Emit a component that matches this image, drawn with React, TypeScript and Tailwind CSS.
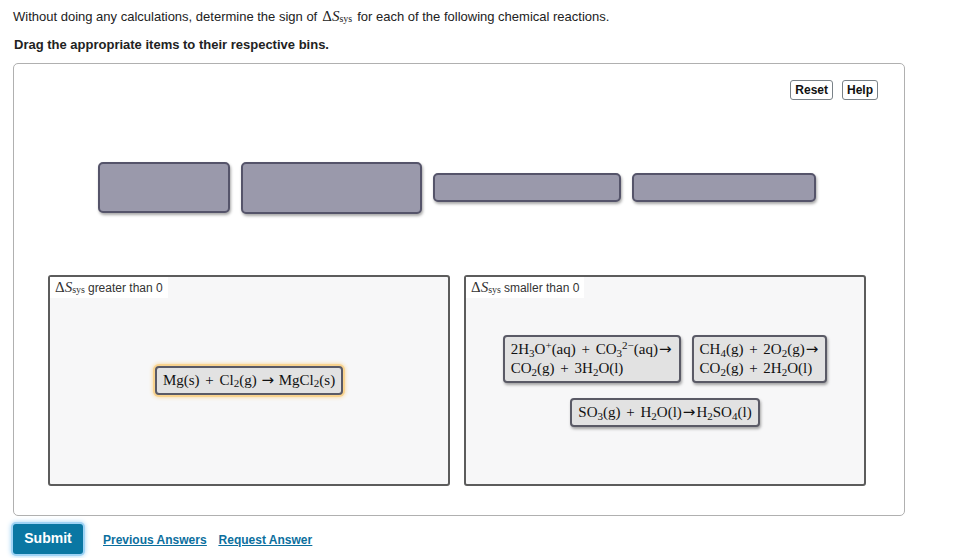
import React from 'react'

const serif = { fontFamily: '"Liberation Serif", "DejaVu Serif", serif' }

function DeltaS() {
  return (
    <span className="font-['Liberation_Serif',serif] text-[15px] leading-[16px] whitespace-nowrap">
      Δ<i>S</i>
      <sub className="text-[10px] relative top-[1px]">sys</sub>
    </span>
  )
}

function Arrow() {
  return <span className="font-['DejaVu_Sans',sans-serif] text-[15px] px-[1px]">→</span>
}

function Plus() {
  return <span className="mx-[2px]">+</span>
}

function Tile({ className }: { className: string }) {
  return (
    <div
      className={`bg-[#9a99ab] border-2 border-[#55546a] rounded-[5px] shadow-[1px_2px_3px_rgba(0,0,0,0.35)] ${className}`}
    />
  )
}

function Item({ children, glow = false }: { children: React.ReactNode; glow?: boolean }) {
  return (
    <div
      className={`bg-[#e2e2e2] border-2 border-[#5a5a66] rounded-[4px] px-[6px] py-[3px] text-[15px] leading-[19px] text-[#111] ${
        glow
          ? 'shadow-[0_0_0_2px_#f9d38e,0_0_4px_2px_#f9d38e]'
          : 'shadow-[1px_2px_3px_rgba(0,0,0,0.35)]'
      }`}
      style={serif}
    >
      {children}
    </div>
  )
}

function Bin({ label, children }: { label: string; children: React.ReactNode }) {
  return (
    <div className="relative w-[402px] h-[211px] bg-[#f7f7f8] border-2 border-[#5c5c5c] rounded-[3px] flex items-center justify-center">
      <div className="absolute top-0 left-0 bg-white px-[5px] pt-[2px] pb-[2px] text-[12px] leading-[16px] text-[#333] flex items-baseline gap-[3px]">
        <DeltaS />
        <span>{label}</span>
      </div>
      {children}
    </div>
  )
}

export default function App() {
  return (
    <div className="w-[968px] h-[558px] bg-white text-[#222] font-['Liberation_Sans',Arial,sans-serif] px-[13px] pt-[7px]">
      {/* Instructions */}
      <p className="text-[13px] flex items-baseline gap-[5px] h-[22px]">
        <span>Without doing any calculations, determine the sign of</span>
        <DeltaS />
        <span>for each of the following chemical reactions.</span>
      </p>
      <p className="text-[13px] font-bold mt-[6px] pl-[1px]">Drag the appropriate items to their respective bins.</p>

      {/* Drag area */}
      <div className="mt-[8px] w-[892px] h-[453px] border border-[#b0b0b0] rounded-[5px] bg-white flex flex-col">
        <div className="flex justify-end gap-[9px] pt-[16px] pr-[26px]">
          <button className="h-[20px] px-[4px] text-[12px] font-bold text-[#111] border border-[#7a8288] rounded-[3px] bg-white">
            Reset
          </button>
          <button className="h-[20px] px-[4px] text-[12px] font-bold text-[#111] border border-[#7a8288] rounded-[3px] bg-white">
            Help
          </button>
        </div>

        <div className="flex items-center gap-[11px] pl-[84px] mt-[62px] h-[52px]">
          <Tile className="w-[132px] h-[51px]" />
          <Tile className="w-[181px] h-[52px]" />
          <Tile className="w-[188px] h-[29px]" />
          <Tile className="w-[184px] h-[29px]" />
        </div>

        <div className="flex gap-[14px] pl-[34px] mt-[61px]">
          <Bin label="greater than 0">
            <Item glow>
              Mg(s) <Plus /> Cl<sub className="text-[11px]">2</sub>(g) <Arrow /> MgCl<sub className="text-[11px]">2</sub>(s)
            </Item>
          </Bin>
          <Bin label="smaller than 0">
            <div className="flex flex-col items-center gap-[15px] mt-[2px]">
              <div className="flex gap-[11px]">
                <Item>
                  <div>
                    2H<sub className="text-[11px]">3</sub>O<sup className="text-[11px]">+</sup>(aq) <Plus /> CO<sub className="text-[11px]">3</sub>
                    <sup className="text-[11px]">2−</sup>(aq)<Arrow />
                  </div>
                  <div>
                    CO<sub className="text-[11px]">2</sub>(g) <Plus /> 3H<sub className="text-[11px]">2</sub>O(l)
                  </div>
                </Item>
                <Item>
                  <div>
                    CH<sub className="text-[11px]">4</sub>(g) <Plus /> 2O<sub className="text-[11px]">2</sub>(g)<Arrow />
                  </div>
                  <div>
                    CO<sub className="text-[11px]">2</sub>(g) <Plus /> 2H<sub className="text-[11px]">2</sub>O(l)
                  </div>
                </Item>
              </div>
              <Item>
                SO<sub className="text-[11px]">3</sub>(g) <Plus /> H<sub className="text-[11px]">2</sub>O(l)<Arrow />H<sub className="text-[11px]">2</sub>SO<sub className="text-[11px]">4</sub>(l)
              </Item>
            </div>
          </Bin>
        </div>
      </div>

      {/* Footer */}
      <div className="flex items-center gap-[20px] mt-[8px]">
        <button className="w-[70px] h-[30px] bg-[#0a77a3] text-white text-[14px] font-bold rounded-[3px] shadow-[0_0_0_2px_#9fd3f5,0_0_5px_2px_#9fd3f5]">
          Submit
        </button>
        <div className="flex gap-[12px] text-[12px] font-bold text-[#0b6f9e] underline mt-[2px]">
          <a href="#">Previous Answers</a>
          <a href="#">Request Answer</a>
        </div>
      </div>
    </div>
  )
}
